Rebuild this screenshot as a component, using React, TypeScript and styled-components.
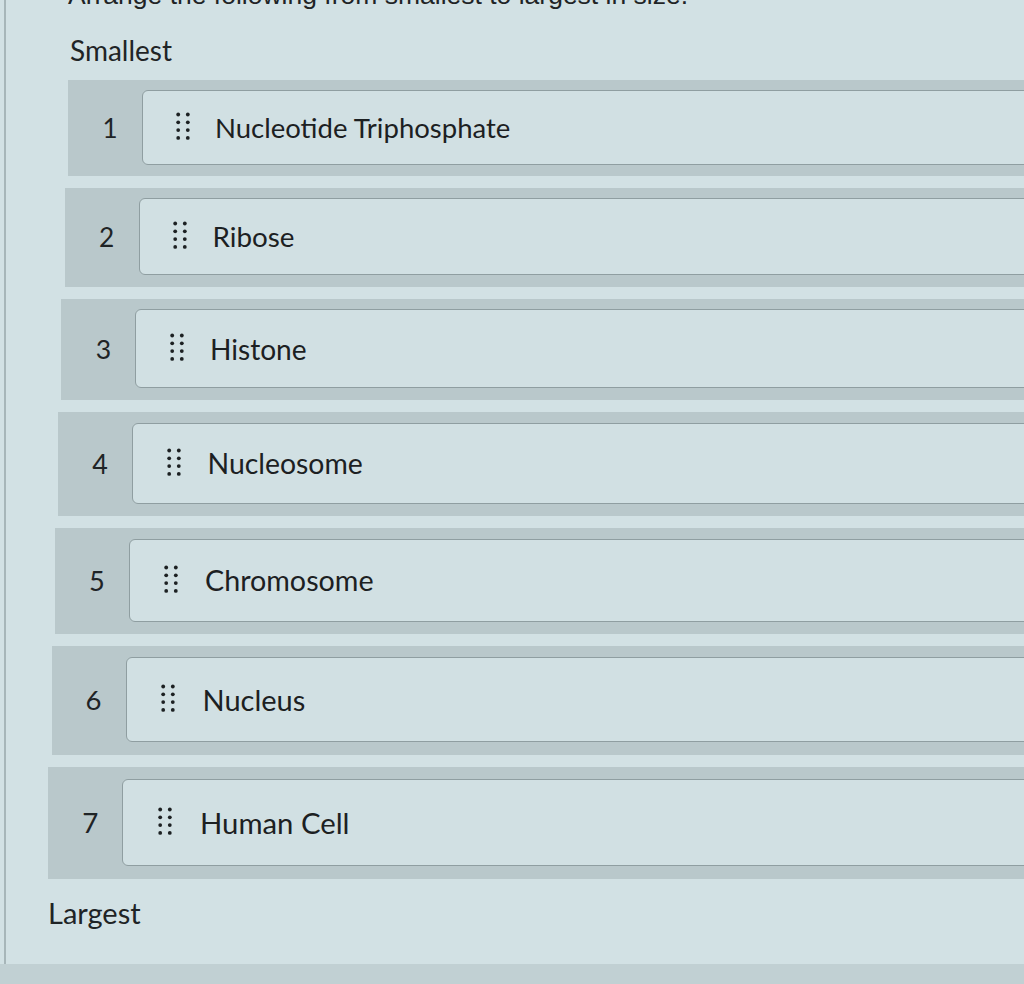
import styled, { createGlobalStyle } from "styled-components";

const items = [
  "Nucleotide Triphosphate",
  "Ribose",
  "Histone",
  "Nucleosome",
  "Chromosome",
  "Nucleus",
  "Human Cell",
];

const GlobalStyle = createGlobalStyle`
  html, body {
    margin: 0;
    padding: 0;
    background: #d2e1e4;
    overflow: hidden;
  }
  #root {
    min-height: 984px;
  }
`;

const Screen = styled.div`
  height: 984px;
  display: flex;
  flex-direction: column;
  background: #d2e1e4;
  color: #1f2426;
  font-family: Lato, "Open Sans", sans-serif;
`;

const Panel = styled.div`
  flex: 1;
  margin-left: 4px;
  border-left: 2px solid #a7b6b9;
  padding-left: 42px;
  display: flex;
  flex-direction: column;
`;

const Prompt = styled.div`
  margin-top: -19px;
  margin-left: 20px;
  font-family: "Liberation Sans", Arial, sans-serif;
  font-size: 26.5px;
  line-height: 28px;
  color: #1f2426;
  white-space: nowrap;
`;

const Label = styled.div<{ $shift: number; $size: number }>`
  margin-left: ${p => p.$shift}px;
  font-size: ${p => p.$size}px;
  line-height: 32px;
  color: #1f2426;
`;

const List = styled.div`
  margin-top: 14px;
  display: flex;
  flex-direction: column;
  gap: 12px;
`;

const Row = styled.div<{ $i: number }>`
  display: flex;
  align-items: stretch;
  height: ${p => 96 + p.$i * 2.6}px;
  margin-left: ${p => 20 - p.$i * 3.3}px;
  margin-right: -40px;
  padding: ${p => 10 + p.$i * 0.3}px 0 ${p => 11 + p.$i * 0.3}px;
  box-sizing: border-box;
  background: #b9c8cb;
`;

const Index = styled.div<{ $i: number }>`
  width: 74px;
  flex-shrink: 0;
  box-sizing: border-box;
  padding-left: 10px;
  display: flex;
  align-items: center;
  justify-content: center;
  font-size: ${p => 26 + p.$i * 0.3}px;
  color: #1f2426;
`;

const Card = styled.div<{ $i: number }>`
  flex: 1;
  display: flex;
  align-items: center;
  gap: ${p => 25 + p.$i * 0.5}px;
  padding-left: ${p => 33 + p.$i * 0.3}px;
  background: #d1e0e3;
  border: 1.5px solid #8f9ea1;
  border-radius: 6px;
  font-size: ${p => 27.5 + p.$i * 0.3}px;
  color: #1c2022;
`;

const Grip = styled.svg`
  width: 14px;
  height: 28px;
  flex-shrink: 0;
  margin-top: -3px;
`;

const Bottom = styled.div`
  height: 20px;
  background: #c1d0d3;
`;

// two columns of four dots, the drag handle
function Handle() {
  const dots = [];
  for (let r = 0; r < 4; r++) {
    for (let c = 0; c < 2; c++) {
      dots.push(<circle key={`${r}-${c}`} cx={2.2 + c * 9.6} cy={2.5 + r * 7.8} r={1.9} fill="#1c2022" />);
    }
  }
  return <Grip viewBox="0 0 14 28">{dots}</Grip>;
}

export default function App() {
  return (
    <>
      <GlobalStyle />
      <Screen>
        <Panel>
          <Prompt>Arrange the following from smallest to largest in size.</Prompt>
          <Label $shift={22} $size={28} style={{ marginTop: 25 }}>Smallest</Label>
          <List>
            {items.map((name, i) => (
              <Row key={name} $i={i}>
                <Index $i={i}>{i + 1}</Index>
                <Card $i={i}>
                  <Handle />
                  <span>{name}</span>
                </Card>
              </Row>
            ))}
          </List>
          <Label $shift={0} $size={29} style={{ marginTop: 18 }}>Largest</Label>
        </Panel>
        <Bottom />
      </Screen>
    </>
  );
}
